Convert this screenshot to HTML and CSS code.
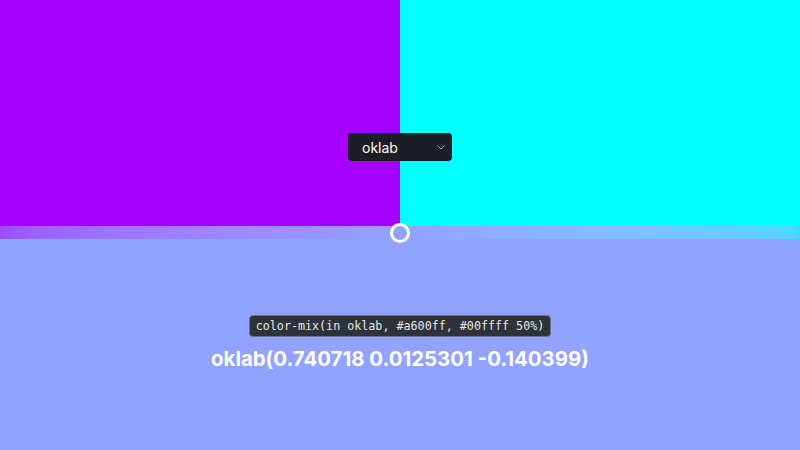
FILE: index.html
```html
<!DOCTYPE html>
<html>
<head>
    <link rel="stylesheet" href="styles.css">
</head>
<body>
    <div class="swatches">
        <div class="swatch from"></div>
        <div class="swatch to"></div>
        <div class="picker">
            <span>oklab</span>
            <svg width="8" height="5" viewBox="0 0 8 5"><path d="M0.5 0.5l3.5 3.5 3.5-3.5" fill="none" stroke="#aaa" stroke-width="1"/></svg>
        </div>
    </div>
    <div class="track">
        <div class="thumb"></div>
    </div>
    <div class="result">
        <code class="expr">color-mix(in oklab, #a600ff, #00ffff 50%)</code>
        <div class="value">oklab(0.740718 0.0125301 -0.140399)</div>
    </div>
</body>
</html>
```
FILE: styles.css
```css
html, body {
    margin: 0;
    height: 100%;
}
body {
    display: flex;
    flex-direction: column;
    background: oklab(0.740718 0.0125301 -0.140399);
    font-family: "Inter", "Liberation Sans", sans-serif;
}
.swatches {
    display: flex;
    height: 226px;
    position: relative;
}
.swatch {
    flex: 1;
}
.from { background: #a600ff; }
.to { background: #00ffff; }
.picker {
    position: absolute;
    left: 348px;
    top: 133px;
    width: 104px;
    height: 28px;
    box-sizing: border-box;
    padding: 0 7px 0 14px;
    display: flex;
    align-items: center;
    justify-content: space-between;
    background: #1d1e23;
    border-radius: 4px;
    color: #fff;
    font-size: 14px;
}
.track {
    height: 13px;
    position: relative;
}
/* gradient under the slider, washed into the mixed colour */
.track::before {
    content: "";
    position: absolute;
    inset: 0;
    background: linear-gradient(to right in oklab, #a600ff, #00ffff);
    opacity: 0.55;
}
.thumb {
    position: absolute;
    left: 390px;
    top: -3px;
    width: 14px;
    height: 14px;
    border: 3px solid #fff;
    border-radius: 50%;
    background: oklab(0.740718 0.0125301 -0.140399);
}
.result {
    display: flex;
    flex-direction: column;
    align-items: center;
    padding-top: 76px;
}
.expr {
    font-family: "DejaVu Sans Mono", "Liberation Mono", monospace;
    font-size: 11.7px;
    color: #e6e6e6;
    background: #2e333b;
    border: 1px solid #6b7280;
    border-radius: 4px;
    padding: 2px 6px;
    line-height: 16px;
}
.value {
    margin-top: 9px;
    color: #fff;
    font-weight: 700;
    font-size: 20.4px;
}
```
